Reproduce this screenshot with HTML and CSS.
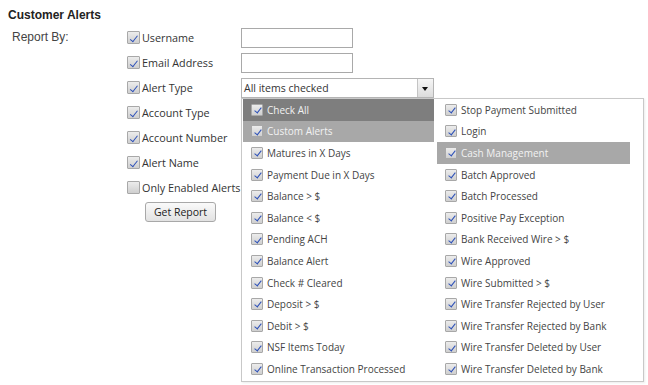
FILE: index.html
```html
<!DOCTYPE html>
<html>
<head>
<meta charset="utf-8">
<link rel="stylesheet" href="styles.css">
</head>
<body>
<div class="page">
  <div class="title">Customer Alerts</div>
  <div class="form">
    <div class="report-label">Report By:</div>
    <div class="checks">
      <div class="row"><span class="cb on"></span>Username</div>
      <div class="row"><span class="cb on"></span>Email Address</div>
      <div class="row"><span class="cb on"></span>Alert Type</div>
      <div class="row"><span class="cb on"></span>Account Type</div>
      <div class="row"><span class="cb on"></span>Account Number</div>
      <div class="row"><span class="cb on"></span>Alert Name</div>
      <div class="row"><span class="cb"></span>Only Enabled Alerts</div>
      <div class="btn-row"><button class="btn">Get Report</button></div>
    </div>
    <div class="fields">
      <div class="frow"><input class="text" type="text"></div>
      <div class="frow"><input class="text" type="text"></div>
      <div class="frow combo-wrap">
        <div class="combo"><span class="combo-text">All items checked</span><span class="arrow"></span></div>
        <div class="panel">
          <div class="col">
            <div class="item dark"><span class="cb sm on"></span>Check All</div>
            <div class="item mid"><span class="cb sm on"></span>Custom Alerts</div>
            <div class="item"><span class="cb sm on"></span>Matures in X Days</div>
            <div class="item"><span class="cb sm on"></span>Payment Due in X Days</div>
            <div class="item"><span class="cb sm on"></span>Balance &gt; $</div>
            <div class="item"><span class="cb sm on"></span>Balance &lt; $</div>
            <div class="item"><span class="cb sm on"></span>Pending ACH</div>
            <div class="item"><span class="cb sm on"></span>Balance Alert</div>
            <div class="item"><span class="cb sm on"></span>Check # Cleared</div>
            <div class="item"><span class="cb sm on"></span>Deposit &gt; $</div>
            <div class="item"><span class="cb sm on"></span>Debit &gt; $</div>
            <div class="item"><span class="cb sm on"></span>NSF Items Today</div>
            <div class="item"><span class="cb sm on"></span>Online Transaction Processed</div>
          </div>
          <div class="col right">
            <div class="item"><span class="cb sm on"></span>Stop Payment Submitted</div>
            <div class="item"><span class="cb sm on"></span>Login</div>
            <div class="item mid"><span class="cb sm on"></span>Cash Management</div>
            <div class="item"><span class="cb sm on"></span>Batch Approved</div>
            <div class="item"><span class="cb sm on"></span>Batch Processed</div>
            <div class="item"><span class="cb sm on"></span>Positive Pay Exception</div>
            <div class="item"><span class="cb sm on"></span>Bank Received Wire &gt; $</div>
            <div class="item"><span class="cb sm on"></span>Wire Approved</div>
            <div class="item"><span class="cb sm on"></span>Wire Submitted &gt; $</div>
            <div class="item"><span class="cb sm on"></span>Wire Transfer Rejected by User</div>
            <div class="item"><span class="cb sm on"></span>Wire Transfer Rejected by Bank</div>
            <div class="item"><span class="cb sm on"></span>Wire Transfer Deleted by User</div>
            <div class="item"><span class="cb sm on"></span>Wire Transfer Deleted by Bank</div>
          </div>
        </div>
      </div>
    </div>
  </div>
</div>
</body>
</html>
```
FILE: styles.css
```css
* { box-sizing: border-box; }
html, body { margin: 0; padding: 0; background: #fff; }
body { width: 648px; height: 385px; overflow: hidden; font-family: "Liberation Sans", Arial, sans-serif; color: #333; }

.title {
  padding: 8px 0 0 8px;
  font-weight: bold;
  font-size: 12px;
  line-height: 14px;
  color: #222;
  height: 25px;
}

.form { display: flex; padding-left: 12px; }

.report-label {
  width: 115px;
  height: 25px;
  line-height: 25px;
  font-size: 12px;
  color: #444;
}

.checks { width: 114px; font-family: "Open Sans", sans-serif; font-size: 10.8px; color: #333; }
.row { height: 25px; display: flex; align-items: center; white-space: nowrap; }
.row .cb { margin-right: 2px; }

.cb {
  position: relative;
  display: inline-block;
  width: 13px;
  height: 13px;
  border: 1px solid #a8a8a8;
  border-radius: 1px;
  background: linear-gradient(#ececec, #cfcfcf);
  flex: none;
}
.cb.sm { width: 12px; height: 12px; }
.cb.on::after {
  content: "";
  position: absolute;
  left: 4px;
  top: 1.5px;
  width: 3px;
  height: 6.5px;
  border-right: 1.8px solid #2c50b8;
  border-bottom: 1.8px solid #2c50b8;
  transform: rotate(38deg);
}
.cb.sm.on::after { left: 3.8px; top: 1.2px; height: 6px; }

.btn-row { padding: 2px 0 0 18px; }
.btn {
  width: 71px;
  height: 20px;
  padding: 0;
  font-family: "Open Sans", sans-serif;
  font-size: 10.5px;
  color: #222;
  border: 1px solid #a8a8a8;
  border-radius: 3px;
  background: linear-gradient(#fafafa, #e2e2e2);
}

.fields { width: 403px; }
.frow { height: 25px; display: flex; align-items: center; }
.text {
  width: 112px;
  height: 20px;
  border: 1px solid #a9a9a9;
  margin: 0;
  padding: 0;
  background: #fff;
}

.combo-wrap { position: relative; }
.combo {
  position: relative;
  z-index: 2;
  width: 193px;
  height: 20px;
  border: 1px solid #b4b4b4;
  background: #fff;
  display: flex;
  align-items: center;
  font-family: "Open Sans", sans-serif;
  font-size: 10.5px;
  color: #333;
}
.combo-text { flex: 1; padding-left: 2px; white-space: nowrap; }
.arrow {
  position: relative;
  width: 16px;
  height: 18px;
  border-left: 1px solid #c4c4c4;
  background: linear-gradient(#f6f6f6, #dcdcdc);
}
.arrow::after {
  content: "";
  position: absolute;
  left: 4px;
  top: 8px;
  border-left: 3.5px solid transparent;
  border-right: 3.5px solid transparent;
  border-top: 4px solid #111;
}

.panel {
  position: absolute;
  z-index: 1;
  left: 0;
  top: 23px;
  width: 403px;
  height: 284px;
  border: 1px solid #c8c8c8;
  background: #fff;
  display: flex;
  gap: 3px;
  padding: 0 0 0 1px;
  box-shadow: 1px 1px 2px rgba(0,0,0,0.08);
}
.col { width: 191px; }
.col.right { width: 193px; }
.item {
  height: 21.6px;
  display: flex;
  align-items: center;
  padding-left: 8px;
  gap: 4px;
  font-family: "Open Sans", sans-serif;
  font-size: 10px;
  color: #444;
  white-space: nowrap;
}
.item.dark { background: #7e7e7e; color: #f2f2f2; }
.item.mid { background: #a8a8a8; color: #f2f2f2; }
```
